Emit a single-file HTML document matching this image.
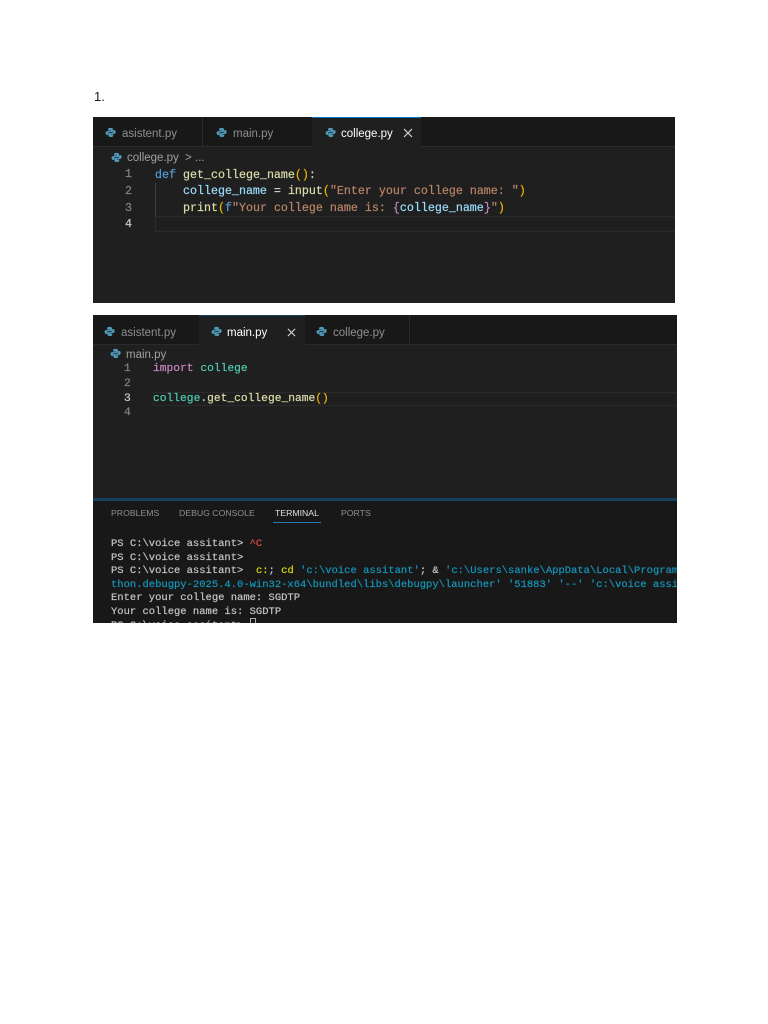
<!DOCTYPE html>
<html>
<head>
<meta charset="utf-8">
<style>
html,body{margin:0;padding:0;background:#fff}
body{width:768px;height:1024px;position:relative;overflow:hidden;font-family:"Liberation Sans",sans-serif}
.a{position:absolute}
.t{position:absolute;white-space:pre;line-height:14px;height:14px}
.s{font-size:11.5px;color:#8f8f8f}
.m1{font-family:"Liberation Mono",monospace;font-size:11.67px;color:#d4d4d4;-webkit-text-stroke:.2px}
.m2{font-family:"Liberation Mono",monospace;font-size:11.28px;color:#d4d4d4;-webkit-text-stroke:.2px}
.m3{font-family:"Liberation Mono",monospace;font-size:10.5px;color:#c4c4c4;-webkit-text-stroke:.2px}
.l{font-size:8.7px;color:#8f8f8f}
.n{color:#858585}
.f{color:#dcdcaa}.v{color:#9cdcfe}.k{color:#569cd6}.o{color:#b98468}.y{color:#e8b800}.p{color:#c586c0}.g{color:#4ec9b0}.b{color:#179fff}
.c{color:#1595b8}
svg.py{position:absolute;width:11px;height:11px}
</style>
</head>
<body>
<svg width="0" height="0" style="position:absolute"><defs>
<symbol id="py" viewBox="0 0 12 12"><path fill="#519aba" d="M6 1C4 1 3.4 1.7 3.4 2.7V4H6.3V4.5H2.4C1.3 4.5.6 5.3.6 6.6S1.3 8.7 2.4 8.7H3.4V7.4C3.4 6.4 4.2 5.6 5.2 5.6H7.4C8.2 5.6 8.7 5 8.7 4.3V2.7C8.7 1.7 8 1 6 1ZM9 3.3V4.6C9 5.6 8.2 6.4 7.2 6.4H5C4.2 6.4 3.7 7 3.7 7.7V9.3C3.7 10.3 4.4 11 6.4 11S9 10.3 9 9.3V8H6.1V7.5H10C11.1 7.5 11.6 6.7 11.6 5.4S11.1 3.3 10 3.3Z"/></symbol>
</defs></svg>

<div class="t" style="left:94px;top:89px;font-size:13px;line-height:15px;color:#1a1a1a">1.</div>

<!-- Screenshot 1 -->
<div class="a" style="left:93px;top:117px;width:582px;height:186px;background:#1f1f1f;overflow:hidden;filter:blur(.3px)">
  <div class="a" style="left:0;top:0;width:582px;height:30px;background:#181818;border-bottom:1px solid #2b2b2b;box-sizing:border-box"></div>
  <div class="a" style="left:109px;top:0;width:1px;height:30px;background:#2b2b2b"></div>
  <div class="a" style="left:219px;top:0;width:109px;height:31px;background:#1f1f1f;border-top:1px solid #0078d4;box-sizing:border-box"></div>
  <svg class="py" style="left:12px;top:10px"><use href="#py"/></svg>
  <div class="t s" style="left:29px;top:10px">asistent.py</div>
  <svg class="py" style="left:123px;top:10px"><use href="#py"/></svg>
  <div class="t s" style="left:140px;top:10px">main.py</div>
  <svg class="py" style="left:232px;top:10px"><use href="#py"/></svg>
  <div class="t s" style="left:248px;top:10px;color:#fff">college.py</div>
  <svg class="a" style="left:310px;top:11px" width="10" height="10" viewBox="0 0 10 10"><path d="M1 1L9 9M9 1L1 9" stroke="#d8d8d8" stroke-width="1.2" fill="none"/></svg>

  <svg class="py" style="left:18px;top:35px"><use href="#py"/></svg>
  <div class="t s" style="left:34px;top:34px;color:#a0a0a0">college.py</div>
  <div class="t s" style="left:92px;top:34px;color:#a0a0a0">&gt;</div>
  <div class="t s" style="left:102px;top:34px;color:#a0a0a0">...</div>

  <div class="t m1 n" style="left:32px;top:50px;color:#858585">1</div>
  <div class="t m1 n" style="left:32px;top:67px">2</div>
  <div class="t m1 n" style="left:32px;top:84px">3</div>
  <div class="t m1" style="left:32px;top:100px;color:#cccccc">4</div>

  <div class="a" style="left:62px;top:66px;width:1px;height:33px;background:#404040"></div>
  <div class="a" style="left:62px;top:99px;width:520px;height:16px;border:1px solid #2a2a2a;border-right:0;box-sizing:border-box"></div>

  <div class="t m1" style="left:62px;top:51px"><span class="k">def</span> <span class="f">get_college_name</span><span class="y">()</span>:</div>
  <div class="t m1" style="left:62px;top:67px">    <span class="v">college_name</span> = <span class="f">input</span><span class="y">(</span><span class="o">"Enter your college name: "</span><span class="y">)</span></div>
  <div class="t m1" style="left:62px;top:84px">    <span class="f">print</span><span class="y">(</span><span class="k">f</span><span class="o">"Your college name is: </span><span class="p">{</span><span class="v">college_name</span><span class="p">}</span><span class="o">"</span><span class="y">)</span></div>
</div>

<!-- Screenshot 2 -->
<div class="a" style="left:93px;top:315px;width:584px;height:308px;background:#1f1f1f;overflow:hidden;filter:blur(.3px)">
  <div class="a" style="left:0;top:0;width:584px;height:30px;background:#181818;border-bottom:1px solid #2b2b2b;box-sizing:border-box"></div>
  <div class="a" style="left:106px;top:0;width:106px;height:31px;background:#1f1f1f;border-top:1px solid #17405f;box-sizing:border-box"></div>
  <div class="a" style="left:316px;top:0;width:1px;height:30px;background:#2b2b2b"></div>
  <svg class="py" style="left:11px;top:11px"><use href="#py"/></svg>
  <div class="t s" style="left:28px;top:11px">asistent.py</div>
  <svg class="py" style="left:118px;top:11px"><use href="#py"/></svg>
  <div class="t s" style="left:134px;top:11px;color:#fff">main.py</div>
  <svg class="a" style="left:194px;top:13px" width="9" height="9" viewBox="0 0 10 10"><path d="M1 1L9 9M9 1L1 9" stroke="#d8d8d8" stroke-width="1.2" fill="none"/></svg>
  <svg class="py" style="left:223px;top:11px"><use href="#py"/></svg>
  <div class="t s" style="left:240px;top:11px">college.py</div>

  <svg class="py" style="left:17px;top:33px"><use href="#py"/></svg>
  <div class="t s" style="left:33px;top:33px;color:#a0a0a0">main.py</div>

  <div class="t m2 n" style="left:31px;top:47px;color:#858585">1</div>
  <div class="t m2 n" style="left:31px;top:62px">2</div>
  <div class="t m2" style="left:31px;top:77px;color:#cccccc">3</div>
  <div class="t m2 n" style="left:31px;top:91px">4</div>

  <div class="a" style="left:60px;top:77px;width:524px;height:14px;border:1px solid #2a2a2a;border-right:0;box-sizing:border-box"></div>
  <div class="t m2" style="left:60px;top:47px"><span class="p">import</span> <span class="g">college</span></div>
  <div class="t m2" style="left:60px;top:77px"><span class="g">college</span>.<span class="f">get_college_name</span><span class="y">()</span></div>

  <!-- panel -->
  <div class="a" style="left:0;top:183px;width:584px;height:125px;background:#181818;border-top:3px solid #17405f;box-sizing:border-box"></div>
  <div class="t l" style="left:18px;top:191px">PROBLEMS</div>
  <div class="t l" style="left:86px;top:191px">DEBUG CONSOLE</div>
  <div class="t l" style="left:182px;top:191px;color:#e0e0e0">TERMINAL</div>
  <div class="t l" style="left:248px;top:191px">PORTS</div>
  <div class="a" style="left:180px;top:207px;width:48px;height:1px;background:#2b7bb0"></div>

  <div class="t m3" style="left:18px;top:222px">PS C:\voice assitant&gt; <span style="color:#e04848">^C</span></div>
  <div class="t m3" style="left:18px;top:236px">PS C:\voice assitant&gt;</div>
  <div class="t m3" style="left:18px;top:249px">PS C:\voice assitant&gt;  <span style="color:#d8d810">c:</span>; <span style="color:#d8d810">cd</span> <span class="c">'c:\voice assitant'</span>; &amp; <span class="c">'c:\Users\sanke\AppData\Local\Programs\Python</span></div>
  <div class="t m3 c" style="left:18px;top:263px;color:#1595b8">thon.debugpy-2025.4.0-win32-x64\bundled\libs\debugpy\launcher' '51883' '--' 'c:\voice assitant'</div>
  <div class="t m3" style="left:18px;top:276px">Enter your college name: SGDTP</div>
  <div class="t m3" style="left:18px;top:290px">Your college name is: SGDTP</div>
  <div class="t m3" style="left:18px;top:304px">PS C:\voice assitant&gt;</div>
  <div class="a" style="left:157px;top:303px;width:6px;height:12px;border:1px solid #aaa;box-sizing:border-box"></div>
</div>
</body>
</html>
